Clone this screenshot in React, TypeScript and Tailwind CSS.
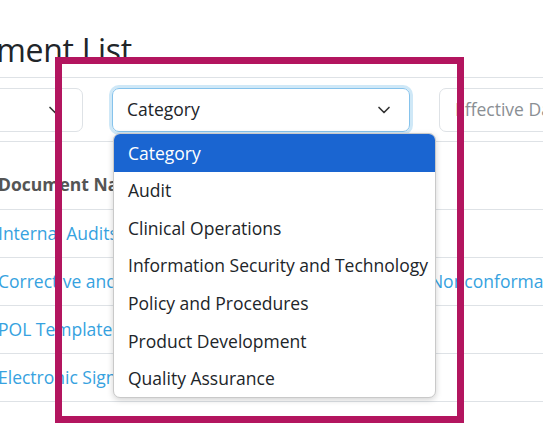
import { ChevronDown } from "lucide-react";

const categories = [
  "Category",
  "Audit",
  "Clinical Operations",
  "Information Security and Technology",
  "Policy and Procedures",
  "Product Development",
  "Quality Assurance",
];

const rows = [
  "Internal Audits",
  "Corrective and Preventive Action (CAPA) Process and Nonconformance",
  "POL Template",
  "Electronic Signatures",
];

export default function App() {
  return (
    <div
      className="relative w-[543px] h-[425px] overflow-hidden bg-white text-[#212529]"
      style={{ fontFamily: '"Open Sans", "Noto Sans", sans-serif' }}
    >
      <div className="pt-[31px]">
        <h1 className="ml-[-80px] text-[32px] leading-[38px] font-medium tracking-[-0.3px] whitespace-nowrap">
          Document List
        </h1>
      </div>

      {/* filters */}
      <div className="mt-[8px] border-t border-b border-[#dee2e6] h-[65px] flex items-center gap-[29px] ml-[-220px]">
        <div className="w-[303px] h-[44px] shrink-0 border border-[#dee2e6] rounded-[7px] flex items-center justify-end pr-[17px]">
          <ChevronDown className="w-[20px] h-[20px] text-[#333]" strokeWidth={2} />
        </div>
        <div className="w-[298px] h-[44px] shrink-0 border border-[#86c3ec] rounded-[7px] ring-[3px] ring-[#cfe8f7] flex items-center justify-between pl-[14px] pr-[15px] text-[17.5px]">
          <span>Category</span>
          <ChevronDown className="w-[20px] h-[20px] text-[#333]" strokeWidth={2} />
        </div>
        <div className="w-[300px] h-[44px] shrink-0 border border-[#dee2e6] rounded-[7px] flex items-center pl-[15px] text-[17.5px] text-[#8a8f94]">
          Effective Date
        </div>
      </div>

      {/* table */}
      <div className="ml-[-2px]">
        <div className="h-[68px] border-b border-[#dee2e6] flex items-end pb-[12px] text-[17.5px] font-bold text-[#555] whitespace-nowrap">
          Document Name
        </div>
        {rows.map((r) => (
          <div
            key={r}
            className="h-[48px] border-b border-[#dee2e6] flex items-center text-[17.5px] text-[#36a2e0] whitespace-nowrap"
          >
            {r}
          </div>
        ))}
      </div>

      {/* open select list */}
      <div className="absolute left-[113px] top-[133px] w-[323px] bg-white border border-[#c9c9c9] rounded-[7px] shadow-[0_2px_6px_rgba(0,0,0,0.18)] overflow-hidden">
        {categories.map((c, i) => (
          <div
            key={c}
            className={
              i === 0
                ? "h-[37.6px] flex items-center pl-[14px] text-[17.5px] bg-[#1a65d1] text-white"
                : "h-[37.6px] flex items-center pl-[14px] text-[17.5px] text-[#212529]"
            }
          >
            {c}
          </div>
        ))}
      </div>

      {/* highlight frame */}
      <div className="absolute left-[55px] top-[57px] w-[409px] h-[366px] border-[7px] border-[#b3155f] pointer-events-none" />
    </div>
  );
}
